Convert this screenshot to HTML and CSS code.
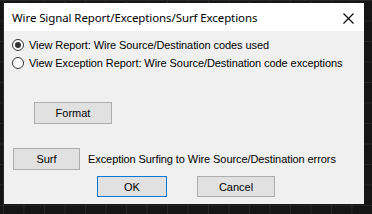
FILE: index.html
```html
<!DOCTYPE html>
<html>
<head>
<meta charset="utf-8">
<link rel="stylesheet" href="styles.css">
</head>
<body>
<div class="dialog">
  <div class="titlebar">
    <span class="title">Wire Signal Report/Exceptions/Surf Exceptions</span>
    <svg class="close" width="11" height="11" viewBox="0 0 11 11"><path d="M0.5 0.5 L10.5 10.5 M10.5 0.5 L0.5 10.5" stroke="#000" stroke-width="1.1" fill="none"/></svg>
  </div>
  <div class="content">
    <div class="radio-row">
      <span class="radio checked"></span>
      <span class="label">View Report: Wire Source/Destination codes used</span>
    </div>
    <div class="radio-row">
      <span class="radio"></span>
      <span class="label">View Exception Report: Wire Source/Destination code exceptions</span>
    </div>
    <div class="format-row">
      <button class="btn btn-format">Format</button>
    </div>
    <div class="surf-row">
      <button class="btn btn-surf">Surf</button>
      <span class="label">Exception Surfing to Wire Source/Destination errors</span>
    </div>
    <div class="action-row">
      <button class="btn btn-ok">OK</button>
      <button class="btn btn-cancel">Cancel</button>
    </div>
  </div>
</div>
</body>
</html>
```

FILE: styles.css
```css
html, body {
  margin: 0;
  padding: 0;
}
body {
  width: 372px;
  height: 214px;
  overflow: hidden;
  background-color: #151515;
  background-image:
    linear-gradient(to right, #262626 1px, transparent 1px),
    linear-gradient(to bottom, #262626 1px, transparent 1px);
  background-size: 20.5px 20.5px;
  background-position: 3px 0px;
  padding-top: 3px;
  padding-left: 4px;
  box-sizing: border-box;
}
.dialog {
  width: 360px;
  height: 201px;
  background: #f0f0f0;
  display: flex;
  flex-direction: column;
}
.titlebar {
  height: 28px;
  background: #ffffff;
  display: flex;
  align-items: center;
  justify-content: space-between;
  padding-left: 8px;
  padding-right: 10px;
  flex-shrink: 0;
}
.title {
  font-family: "Noto Sans", "Open Sans", sans-serif;
  font-size: 11.5px;
  color: #000;
  letter-spacing: -0.1px;
  margin-top: 1px;
}
.close {
  display: block;
  margin-top: 2px;
}
.content {
  font-family: "Liberation Sans", Arial, sans-serif;
  font-size: 11px;
  letter-spacing: -0.08px;
  color: #000;
  padding-top: 5px;
  padding-left: 8px;
}
.radio-row {
  height: 18px;
  display: flex;
  align-items: center;
}
.radio {
  width: 12px;
  height: 12px;
  border: 1px solid #333;
  border-radius: 50%;
  background: #fff;
  box-sizing: border-box;
  display: flex;
  align-items: center;
  justify-content: center;
  margin-right: 5px;
  flex-shrink: 0;
}
.radio.checked::after {
  content: "";
  width: 6px;
  height: 6px;
  border-radius: 50%;
  background: #333;
}
.label {
  white-space: nowrap;
}
.btn {
  font-family: "Liberation Sans", Arial, sans-serif;
  font-size: 11px;
  color: #000;
  background: #e1e1e1;
  border: 1px solid #adadad;
  padding: 0;
  margin: 0;
  height: 22px;
  box-sizing: border-box;
}
.format-row {
  margin-top: 30px;
  padding-left: 22px;
  display: flex;
}
.btn-format {
  width: 78px;
}
.surf-row {
  margin-top: 24px;
  display: flex;
  align-items: center;
  gap: 8px;
  padding-left: 1px;
}
.btn-surf {
  width: 67px;
}
.action-row {
  margin-top: 6px;
  display: flex;
  gap: 30px;
  padding-left: 85px;
}
.btn-ok {
  width: 70px;
  height: 21px;
  border-color: #0078d7;
}
.btn-cancel {
  width: 78px;
  height: 21px;
}
```
